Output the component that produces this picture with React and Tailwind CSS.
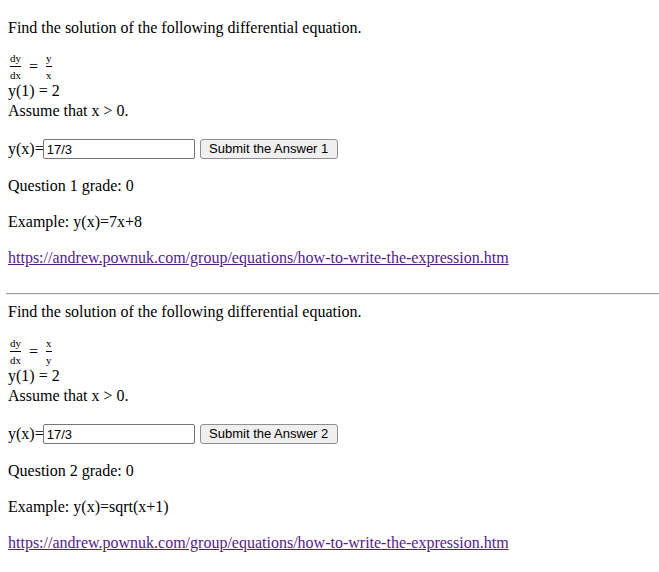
import React from "react";

function Frac({ top, bottom }) {
  return (
    <span className="inline-flex flex-col items-center px-[2px] text-[11px]">
      <span className="h-[13px] leading-[10px]">{top}</span>
      <span className="self-stretch border-t border-black" />
      <span className="h-[14px] pt-[3px] leading-[11px]">{bottom}</span>
    </span>
  );
}

function Section({ n, num, den, example, first }) {
  return (
    <div className={first ? "pt-[19px]" : "pt-[8px]"}>
      <div className="h-[18px]">Find the solution of the following differential equation.</div>
      <div className={(first ? "mt-[16px]" : "mt-[17px]") + " flex h-[28px] items-center"}>
        <Frac top="dy" bottom="dx" />
        <span className="ml-[6px]">=</span>
        <span className="ml-[6px] flex">
          <Frac top={num} bottom={den} />
        </span>
      </div>
      <div className="mt-[1px] h-[18px]">y(1) = 2</div>
      <div className="mt-[2px] h-[18px]">Assume that x &gt; 0.</div>
      <div className="mt-[19px] flex h-[20px] items-center">
        <span>y(x)=</span>
        <input
          defaultValue="17/3"
          className="-ml-[1px] h-[20px] w-[152px] rounded-[2px] border border-[#767676] bg-white px-[3px] font-['Liberation_Sans',Arial,sans-serif] text-[13px] text-black outline-none"
        />
        <button className="ml-[5px] h-[20px] w-[138px] rounded-[3px] border border-[#8f8f8f] bg-[#efefef] px-[6px] font-['Liberation_Sans',Arial,sans-serif] text-[13px] leading-[18px] text-black">
          Submit the Answer {n}
        </button>
      </div>
      <div className="mt-[18px] h-[18px]">Question {n} grade: 0</div>
      <div className="mt-[18px] h-[18px]">Example: {example}</div>
      <div className="mt-[18px] h-[18px]">
        <a href="#" className="text-[#551a8b] underline">
          https://andrew.pownuk.com/group/equations/how-to-write-the-expression.htm
        </a>
      </div>
      <div className="-ml-[2px] -mr-[8px] mt-[26px] border-t border-b border-t-[#9a9a9a] border-b-[#eeeeee]" />
    </div>
  );
}

export default function App() {
  return (
    <div className="min-h-[572px] bg-white px-[8px] font-['Liberation_Serif','Times_New_Roman',serif] text-[16px] leading-[18px] text-black">
      <Section n={1} num="y" den="x" example="y(x)=7x+8" first />
      <Section n={2} num="x" den="y" example="y(x)=sqrt(x+1)" />
    </div>
  );
}
